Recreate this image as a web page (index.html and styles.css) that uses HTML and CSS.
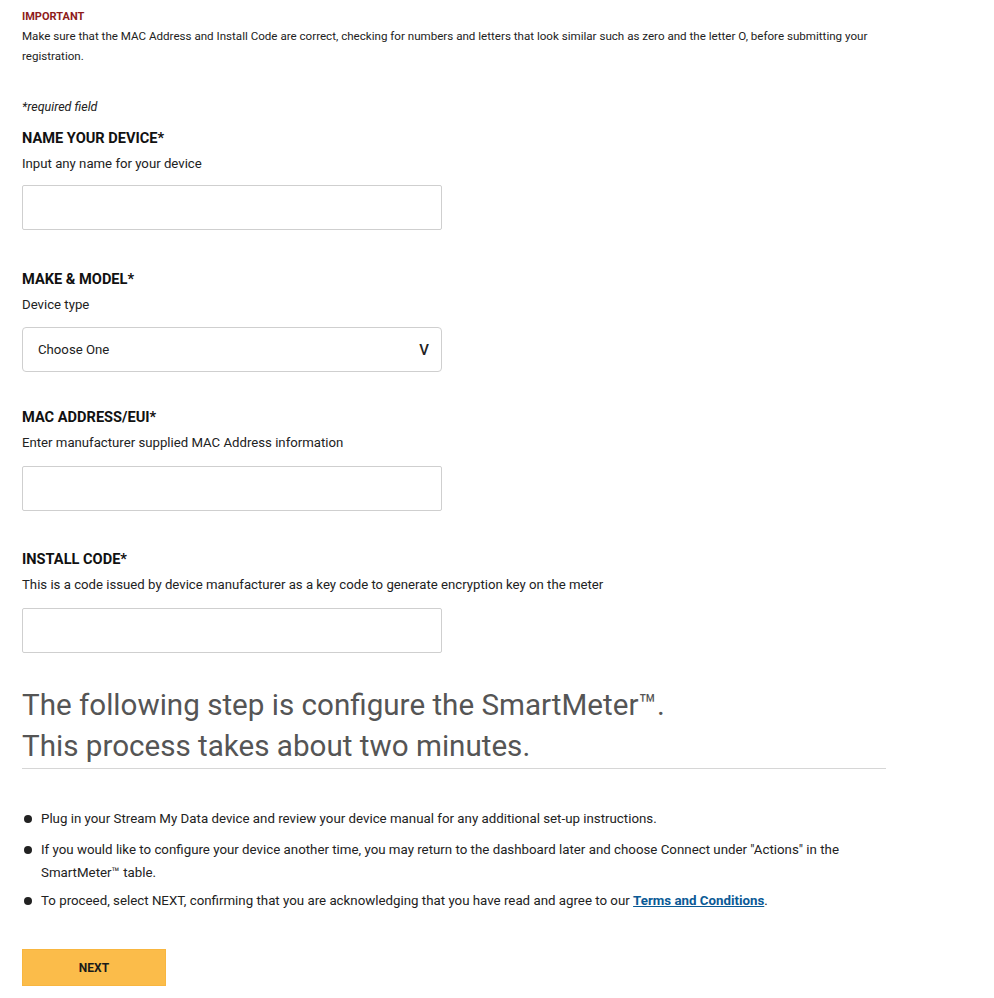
FILE: index.html
```html
<!DOCTYPE html>
<html>
<head>
<meta charset="utf-8">
<link rel="stylesheet" href="styles.css">
</head>
<body>
<div class="page">
  <div class="notice">
    <div class="notice-title">IMPORTANT</div>
    <p class="notice-text">Make sure that the MAC Address and Install Code are correct, checking for numbers and letters that look similar such as zero and the letter O, before submitting your registration.</p>
  </div>
  <div class="required">*required field</div>

  <div class="field field-name">
    <div class="label">NAME YOUR DEVICE*</div>
    <div class="help">Input any name for your device</div>
    <div class="input"></div>
  </div>

  <div class="field field-model">
    <div class="label">MAKE &amp; MODEL*</div>
    <div class="help">Device type</div>
    <div class="select"><span>Choose One</span><span class="caret">V</span></div>
  </div>

  <div class="field field-mac">
    <div class="label">MAC ADDRESS/EUI*</div>
    <div class="help">Enter manufacturer supplied MAC Address information</div>
    <div class="input"></div>
  </div>

  <div class="field field-code">
    <div class="label">INSTALL CODE*</div>
    <div class="help">This is a code issued by device manufacturer as a key code to generate encryption key on the meter</div>
    <div class="input"></div>
  </div>

  <h2 class="step">The following step is configure the SmartMeter™.<br>This process takes about two minutes.</h2>

  <ul class="bullets">
    <li>Plug in your Stream My Data device and review your device manual for any additional set-up instructions.</li>
    <li>If you would like to configure your device another time, you may return to the dashboard later and choose Connect under "Actions" in the SmartMeter™ table.</li>
    <li>To proceed, select NEXT, confirming that you are acknowledging that you have read and agree to our <a class="link" href="#">Terms and Conditions</a>.</li>
  </ul>

  <button class="next">NEXT</button>
</div>
</body>
</html>
```

FILE: styles.css
```css
* { box-sizing: border-box; }
html, body { margin: 0; padding: 0; background: #fff; }
body {
  font-family: "Roboto", "Liberation Sans", sans-serif;
  color: #1a1a1a;
}
.page {
  padding: 10px 22px 12px 22px;
  width: 994px;
}
.notice-title {
  color: #8e1b1b;
  font-weight: 700;
  font-size: 11px;
  line-height: 14px;
}
.notice-text {
  margin: 2px 0 0 0;
  font-size: 11.6px;
  line-height: 20px;
  width: 880px;
  color: #222;
}
.required {
  margin-top: 32px;
  font-style: italic;
  font-size: 12.5px;
  line-height: 18px;
  color: #222;
}
.field { margin-bottom: 42px; }
.field-name { margin-bottom: 41px; }
.field-name .label { margin-top: 14px; }
.field-model { margin-bottom: 37px; }
.field-mac { margin-bottom: 40px; }
.field-mac .input, .field-code .input { margin-top: 15px; }
.label {
  margin-top: 12px;
  font-weight: 700;
  font-size: 14.6px;
  line-height: 16px;
  color: #111;
}
.help {
  margin-top: 10px;
  font-size: 13.2px;
  line-height: 16px;
  color: #222;
}
.input, .select {
  margin-top: 13px;
  width: 420px;
  height: 45px;
  border: 1px solid #cfcfcf;
  border-radius: 2px;
  background: #fff;
}
.select {
  margin-top: 14px;
  border-radius: 4px;
  display: flex;
  align-items: center;
  justify-content: space-between;
  padding: 0 12px 0 15px;
  font-size: 13.2px;
  color: #222;
}
.caret { font-size: 15px; font-weight: 500; }
.step {
  margin: -10px 0 0 0;
  font-weight: 400;
  font-size: 29.6px;
  line-height: 41px;
  color: #555;
  width: 864px;
  padding-bottom: 1px;
  border-bottom: 1px solid #d6d6d6;
}
.bullets {
  list-style: none;
  margin: 38px 0 0 0;
  padding: 0;
  width: 864px;
}
.bullets li {
  position: relative;
  padding-left: 19px;
  font-size: 13.3px;
  line-height: 23px;
  color: #222;
  margin-bottom: 8px;
}
.bullets li:nth-child(2) { margin-bottom: 5px; }
.bullets li::before {
  content: "";
  position: absolute;
  left: 2px;
  top: 8px;
  width: 8px;
  height: 8px;
  border-radius: 50%;
  background: #222;
}
.link {
  color: #0a5a96;
  font-weight: 700;
  text-decoration: underline;
}
.next {
  margin-top: 29px;
  width: 144px;
  height: 37px;
  background: #fbbc4a;
  border: 1px solid #f8b640;
  font-family: inherit;
  font-weight: 700;
  font-size: 12px;
  color: #1a1a1a;
  cursor: pointer;
}
```
